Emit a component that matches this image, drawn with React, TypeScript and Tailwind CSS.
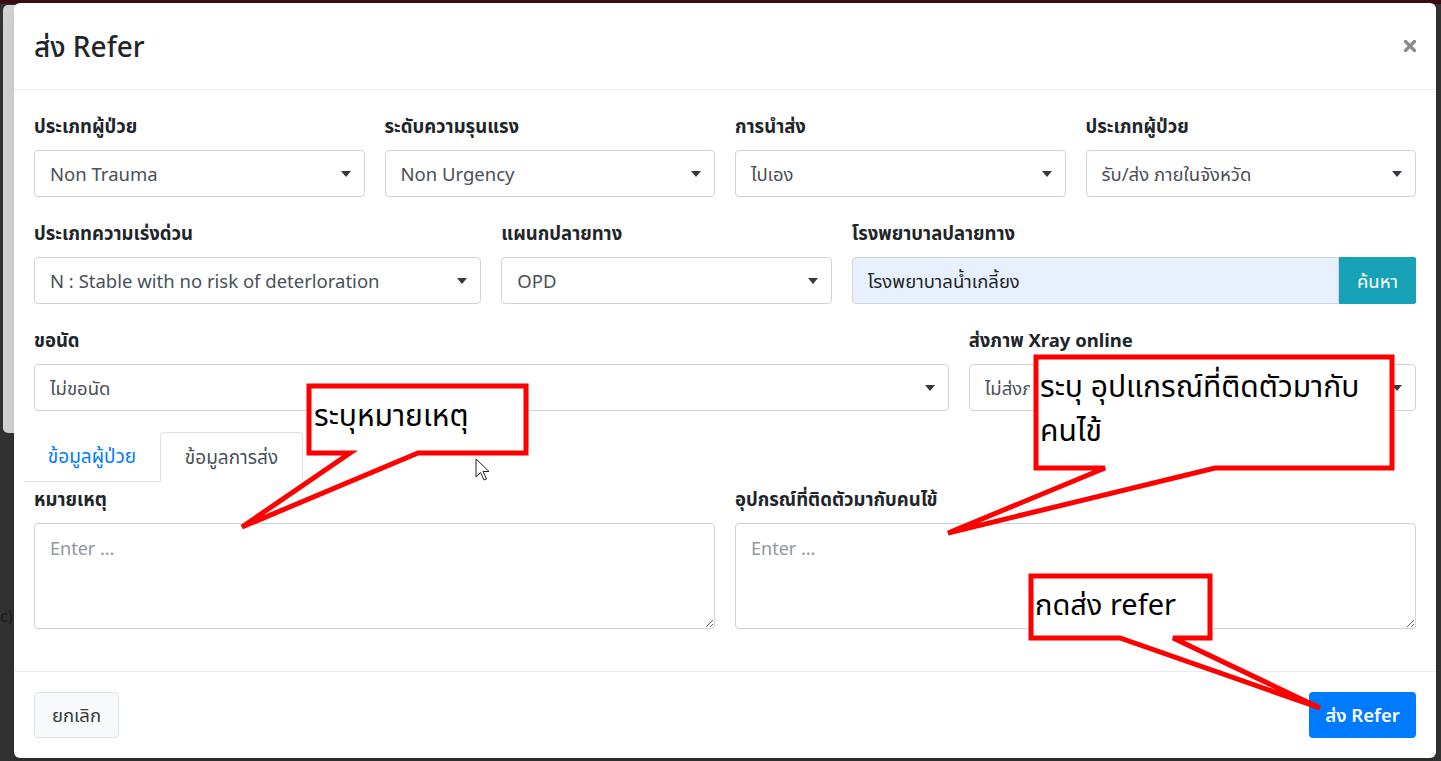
import React from 'react';

const FONT = { fontFamily: '"Noto Sans", "Noto Sans Thai", "Liberation Sans", sans-serif' };

function Caret() {
  return (
    <svg width="10" height="6" viewBox="0 0 10 6" className="shrink-0">
      <path d="M0 0 L10 0 L5 6 Z" fill="#343a40" />
    </svg>
  );
}

function Label({ children }: { children: React.ReactNode }) {
  return <div className="h-[24px] leading-[24px] text-[18.5px] font-bold text-[#212529] mb-[12px] whitespace-nowrap">{children}</div>;
}

function Select({ value, clip }: { value: string; clip?: boolean }) {
  return (
    <div className="h-[47px] border border-[#ced4da] rounded-[4px] flex items-center justify-between pl-[15px] pr-[13px] text-[18.5px] text-[#495057] bg-white">
      <span className={clip ? 'whitespace-nowrap overflow-hidden w-[45px]' : 'whitespace-nowrap'}>{value}</span>
      <Caret />
    </div>
  );
}

function Field({ label, value, span, clip }: { label: string; value: string; span: string; clip?: boolean }) {
  return (
    <div className={span}>
      <Label>{label}</Label>
      <Select value={value} clip={clip} />
    </div>
  );
}

function Bubbles() {
  return (
    <>
      <svg className="absolute inset-0 pointer-events-none" width="1441" height="761" viewBox="0 0 1441 761">
        <path d="M309 386 L526 386 L526 453 L418 453 L242 527 L350 453 L309 453 Z" fill="white" stroke="#ff0000" strokeWidth="5" strokeLinejoin="miter" />
        <path d="M1036 357 L1392 357 L1392 468 L1215 468 L948 533 L1105 468 L1036 468 Z" fill="white" stroke="#ff0000" strokeWidth="5" />
        <path d="M1031 576 L1210 576 L1210 638 L1173 638 L1320 708 L1120 638 L1031 638 Z" fill="white" stroke="#ff0000" strokeWidth="5" />
        {/* mouse cursor */}
        <path d="M476 459 L476 477 L480.5 472.5 L484 480 L486.5 479 L483 471.5 L489 471.5 Z" fill="white" stroke="#222" strokeWidth="1" />
      </svg>
      <div className="absolute left-[314px] top-[395px] text-[30px] leading-[40px] text-black pointer-events-none whitespace-nowrap" style={FONT}>ระบุหมายเหตุ</div>
      <div className="absolute left-[1040px] top-[364px] text-[30px] leading-[44px] text-black pointer-events-none whitespace-nowrap" style={FONT}>
        ระบุ อุปแกรณ์ที่ติดตัวมากับ
        <br />
        คนไข้
      </div>
      <div className="absolute left-[1035px] top-[584px] text-[29px] leading-[40px] text-black pointer-events-none whitespace-nowrap" style={FONT}>กดส่ง refer</div>
    </>
  );
}

export default function App() {
  return (
    <div className="relative w-full h-[761px] overflow-hidden bg-[#323232]" style={FONT}>
      {/* page behind the backdrop */}
      <div className="absolute left-0 top-0 w-full h-[4px] bg-[#370b10]" />
      <div className="absolute left-[3px] top-[5px] w-[40px] h-[428px] rounded-[5px] bg-[#d2d2d2]" />
      <div className="absolute left-0 top-[604px] text-[16px] text-[#1c1c1c]">c)</div>

      {/* modal */}
      <div className="absolute left-[14px] top-[3px] w-[1422px] h-[755px] bg-white rounded-[6px] flex flex-col shadow-lg">
        <div className="h-[87px] shrink-0 border-b border-[#e9ecef] flex items-center justify-between px-[20px]">
          <div className="text-[28px] font-medium text-[#212529] leading-none">ส่ง Refer</div>
          <svg width="12" height="12" viewBox="0 0 12 12">
            <path d="M1.5 1.5 L10.5 10.5 M10.5 1.5 L1.5 10.5" stroke="#8a8a8a" strokeWidth="3.2" strokeLinecap="round" />
          </svg>
        </div>

        <div className="flex-1 px-[20px] pt-[24px]">
          <div className="grid grid-cols-12 gap-x-[20px] gap-y-[24px]">
            <Field span="col-span-3" label="ประเภทผู้ป่วย" value="Non Trauma" />
            <Field span="col-span-3" label="ระดับความรุนแรง" value="Non Urgency" />
            <Field span="col-span-3" label="การนำส่ง" value="ไปเอง" />
            <Field span="col-span-3" label="ประเภทผู้ป่วย" value="รับ/ส่ง ภายในจังหวัด" />

            <Field span="col-span-4" label="ประเภทความเร่งด่วน" value="N : Stable with no risk of deterloration" />
            <Field span="col-span-3" label="แผนกปลายทาง" value="OPD" />
            <div className="col-span-5">
              <Label>โรงพยาบาลปลายทาง</Label>
              <div className="h-[47px] flex">
                <div className="flex-1 border border-[#ced4da] rounded-l-[4px] bg-[#e8f0fe] flex items-center pl-[15px] text-[18.5px] text-[#212529]">
                  โรงพยาบาลน้ำเกลี้ยง
                </div>
                <div className="w-[77px] bg-[#17a2b8] text-white text-[18.5px] flex items-center justify-center rounded-r-[2px]">ค้นหา</div>
              </div>
            </div>

            <Field span="col-span-8" label="ขอนัด" value="ไม่ขอนัด" />
            <Field span="col-span-4" label="ส่งภาพ Xray online" value="ไม่ส่งภาพ" clip />
          </div>

          <div className="mt-[21px] ml-[-10px] flex h-[50px]">
            <div className="w-[136px] border-b border-[#dee2e6] flex items-center justify-center text-[19px] text-[#007bff]">ข้อมูลผู้ป่วย</div>
            <div className="w-[143px] border border-b-0 border-[#dee2e6] rounded-t-[4px] flex items-center justify-center text-[19px] text-[#495057]">ข้อมูลการส่ง</div>
          </div>

          <div className="mt-[5px] grid grid-cols-12 gap-x-[20px]">
            <div className="col-span-6">
              <Label>หมายเหตุ</Label>
              <textarea
                placeholder="Enter ..."
                className="block w-full h-[106px] border border-[#ced4da] rounded-[4px] px-[15px] py-[12px] text-[18px] leading-[24px] placeholder:text-[#8f979e] outline-none"
                style={FONT}
              />
            </div>
            <div className="col-span-6">
              <Label>อุปกรณ์ที่ติดตัวมากับคนไข้</Label>
              <textarea
                placeholder="Enter ..."
                className="block w-full h-[106px] border border-[#ced4da] rounded-[4px] px-[15px] py-[12px] text-[18px] leading-[24px] placeholder:text-[#8f979e] outline-none"
                style={FONT}
              />
            </div>
          </div>
        </div>

        <div className="h-[87px] shrink-0 border-t border-[#e9ecef] flex items-center justify-between px-[20px]">
          <div className="h-[46px] w-[85px] border border-[#dee2e6] bg-[#f8f9fa] rounded-[4px] flex items-center justify-center text-[18.5px] text-[#343a40]">ยกเลิก</div>
          <div className="h-[46px] w-[107px] bg-[#007bff] rounded-[4px] flex items-center justify-center text-[18.5px] font-semibold text-white">ส่ง Refer</div>
        </div>
      </div>

      <Bubbles />
    </div>
  );
}
